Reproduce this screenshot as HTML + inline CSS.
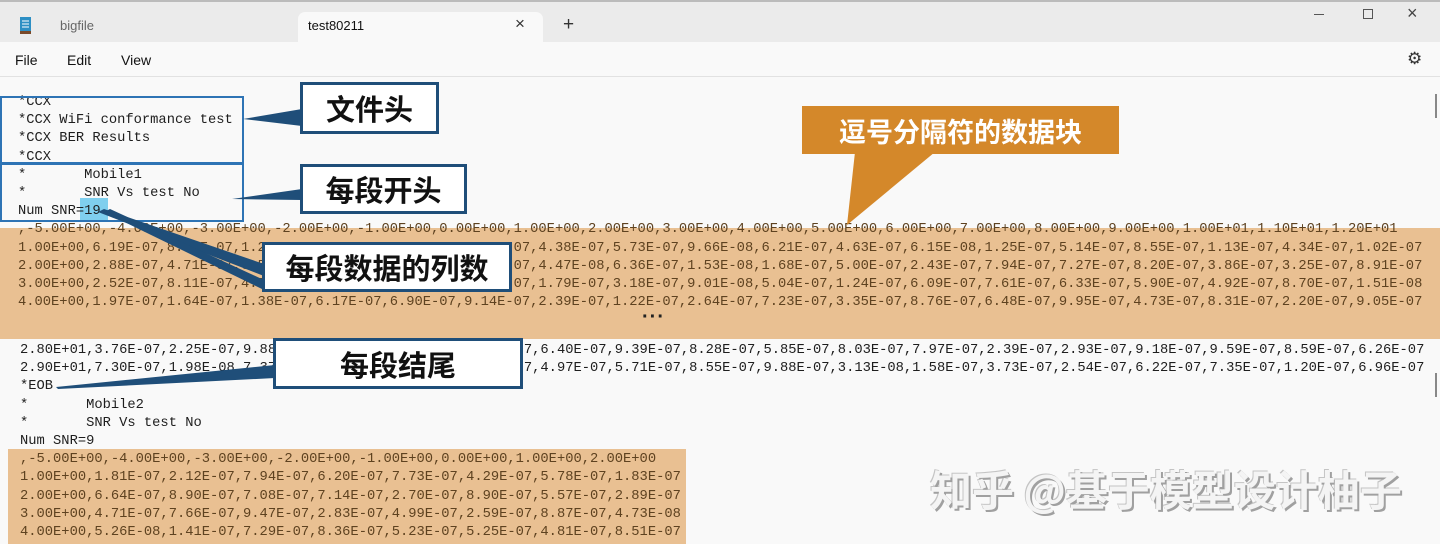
<!DOCTYPE html>
<html><head><meta charset="utf-8"><style>
*{margin:0;padding:0;box-sizing:border-box}
body{width:1440px;height:544px;overflow:hidden;background:#f9f9f9;position:relative;font-family:"Liberation Sans","Noto Sans CJK SC",sans-serif}
.abs{position:absolute}
pre{position:absolute;font-family:"Liberation Mono","DejaVu Sans Mono",monospace;font-size:13.77px;line-height:18.2px;color:#1e1e1e;white-space:pre}
.o{color:#5e4220}
.call{position:absolute;background:#fff;border:3px solid #1f4e79;font-weight:bold;font-size:29px;color:#111;display:flex;align-items:center;justify-content:center;font-family:"Noto Sans CJK SC",sans-serif}
</style></head><body>
<div class="abs" style="left:0;top:0;width:1440px;height:42px;background:#ebebeb"></div>
<div class="abs" style="left:0;top:0;width:1440px;height:2px;background:#bbb"></div>
<div class="abs" style="left:298px;top:12px;width:245px;height:31px;background:#f9f9f9;border-radius:7px 7px 0 0"></div>
<svg class="abs" style="left:18px;top:16px" width="16" height="20"><rect x="2" y="1" width="11" height="15" fill="#2d8fc4"/><rect x="2" y="15" width="11" height="3" fill="#7a4a2a"/><line x1="4" y1="5" x2="11" y2="5" stroke="#fff"/><line x1="4" y1="8" x2="11" y2="8" stroke="#fff"/><line x1="4" y1="11" x2="11" y2="11" stroke="#fff"/></svg>
<div class="abs" style="left:60px;top:18px;font-size:13px;color:#666">bigfile</div>
<div class="abs" style="left:308px;top:18px;font-size:13px;color:#111">test80211</div>
<div class="abs" style="left:515px;top:14px;font-size:17px;color:#333">×</div>
<div class="abs" style="left:563px;top:14px;font-size:19px;color:#333">+</div>
<div class="abs" style="left:1314px;top:14px;width:10px;height:1px;background:#555"></div>
<div class="abs" style="left:1363px;top:9px;width:10px;height:10px;border:1px solid #555"></div>
<div class="abs" style="left:1407px;top:3px;font-size:18px;color:#444">×</div>
<div class="abs" style="left:15px;top:52px;font-size:14px;color:#111">File</div>
<div class="abs" style="left:67px;top:52px;font-size:14px;color:#111">Edit</div>
<div class="abs" style="left:121px;top:52px;font-size:14px;color:#111">View</div>
<div class="abs" style="left:1407px;top:49px;font-size:17px;color:#333">⚙</div>
<div class="abs" style="left:0;top:76px;width:1440px;height:1px;background:#e2e2e2"></div>
<div class="abs" style="left:1435px;top:94px;width:2px;height:24px;background:#888"></div>
<div class="abs" style="left:1435px;top:373px;width:2px;height:24px;background:#888"></div>

<div class="abs" style="left:0;top:228px;width:1440px;height:111px;background:#e9c092"></div>
<div class="abs" style="left:8px;top:449px;width:678px;height:95px;background:#e9c092"></div>
<div class="abs" style="left:80px;top:198px;width:28px;height:23px;background:#7fcfee"></div>

<pre style="left:18px;top:94px">*CCX
*CCX WiFi conformance test
*CCX BER Results
*CCX
*       Mobile1
*       SNR Vs test No
Num SNR=19
<span class="o">,-5.00E+00,-4.00E+00,-3.00E+00,-2.00E+00,-1.00E+00,0.00E+00,1.00E+00,2.00E+00,3.00E+00,4.00E+00,5.00E+00,6.00E+00,7.00E+00,8.00E+00,9.00E+00,1.00E+01,1.10E+01,1.20E+01
1.00E+00,6.19E-07,8.63E-07,1.22E-07,3.55E-07,7.81E-07,2.60E-07,4.38E-07,5.73E-07,9.66E-08,6.21E-07,4.63E-07,6.15E-08,1.25E-07,5.14E-07,8.55E-07,1.13E-07,4.34E-07,1.02E-07
2.00E+00,2.88E-07,4.71E-07,6.51E-07,2.17E-07,8.02E-07,3.12E-07,4.47E-08,6.36E-07,1.53E-08,1.68E-07,5.00E-07,2.43E-07,7.94E-07,7.27E-07,8.20E-07,3.86E-07,3.25E-07,8.91E-07
3.00E+00,2.52E-07,8.11E-07,4.72E-07,5.30E-07,9.01E-07,6.44E-07,1.79E-07,3.18E-07,9.01E-08,5.04E-07,1.24E-07,6.09E-07,7.61E-07,6.33E-07,5.90E-07,4.92E-07,8.70E-07,1.51E-08
4.00E+00,1.97E-07,1.64E-07,1.38E-07,6.17E-07,6.90E-07,9.14E-07,2.39E-07,1.22E-07,2.64E-07,7.23E-07,3.35E-07,8.76E-07,6.48E-07,9.95E-07,4.73E-07,8.31E-07,2.20E-07,9.05E-07</span></pre>
<div class="abs" style="left:642px;top:306px;font-size:20px;font-weight:bold;color:#222;letter-spacing:1px">···</div>
<pre style="left:20px;top:342px">2.80E+01,3.76E-07,2.25E-07,9.88E-07,1.11E-07,4.51E-08,3.02E-07,6.40E-07,9.39E-07,8.28E-07,5.85E-07,8.03E-07,7.97E-07,2.39E-07,2.93E-07,9.18E-07,9.59E-07,8.59E-07,6.26E-07
2.90E+01,7.30E-07,1.98E-08,7.37E-07,3.31E-07,2.17E-07,6.81E-07,4.97E-07,5.71E-07,8.55E-07,9.88E-07,3.13E-08,1.58E-07,3.73E-07,2.54E-07,6.22E-07,7.35E-07,1.20E-07,6.96E-07
*EOB
*       Mobile2
*       SNR Vs test No
Num SNR=9
<span class="o">,-5.00E+00,-4.00E+00,-3.00E+00,-2.00E+00,-1.00E+00,0.00E+00,1.00E+00,2.00E+00
1.00E+00,1.81E-07,2.12E-07,7.94E-07,6.20E-07,7.73E-07,4.29E-07,5.78E-07,1.83E-07
2.00E+00,6.64E-07,8.90E-07,7.08E-07,7.14E-07,2.70E-07,8.90E-07,5.57E-07,2.89E-07
3.00E+00,4.71E-07,7.66E-07,9.47E-07,2.83E-07,4.99E-07,2.59E-07,8.87E-07,4.73E-08
4.00E+00,5.26E-08,1.41E-07,7.29E-07,8.36E-07,5.23E-07,5.25E-07,4.81E-07,8.51E-07</span></pre>

<div class="abs" style="left:0;top:96px;width:244px;height:68px;border:2px solid #2e74b5"></div>
<div class="abs" style="left:0;top:163px;width:244px;height:59px;border:2px solid #2e74b5"></div>

<svg class="abs" style="left:0;top:0" width="1440" height="544">
<polygon points="243,119 302,109 302,126" fill="#1f4e79"/>
<polygon points="232,199 302,189 302,200" fill="#1f4e79"/>
<polygon points="98,212 104,209 264,264 264,276" fill="#1f4e79"/>
<polygon points="104,212 110,209 264,280 264,290" fill="#1f4e79"/>
<polygon points="56,387 275,365 275,378 58,389" fill="#1f4e79"/>
<polygon points="855,152 935,152 847,225" fill="#d4882a"/>
</svg>

<div class="call" style="left:300px;top:82px;width:139px;height:52px">文件头</div>
<div class="call" style="left:300px;top:164px;width:167px;height:50px">每段开头</div>
<div class="call" style="left:262px;top:242px;width:250px;height:50px">每段数据的列数</div>
<div class="call" style="left:273px;top:338px;width:250px;height:51px">每段结尾</div>
<div class="abs" style="left:802px;top:106px;width:317px;height:48px;background:#d4882a;color:#fff;font-size:27px;font-weight:bold;display:flex;align-items:center;justify-content:center;font-family:'Noto Sans CJK SC',sans-serif">逗号分隔符的数据块</div>

<div class="abs" style="left:930px;top:458px;font-size:42px;font-weight:bold;color:#f4f4f4;text-shadow:2px 2px 0 #a0a0a0,-1px -1px 0 #c4c4c4;white-space:nowrap;font-family:'Noto Sans CJK SC',sans-serif">知乎 @基于模型设计柚子</div>
</body></html>
